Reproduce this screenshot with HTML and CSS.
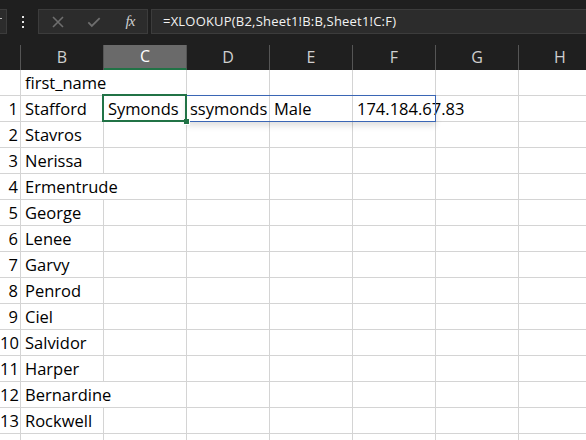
FILE: index.html
```html
<!DOCTYPE html>
<html>
<head>
<meta charset="utf-8">
<link rel="stylesheet" href="styles.css">
</head>
<body>
<div class="app">
  <div class="fbar">
    <div class="namebox"><span class="nb-arrow"></span></div>
    <div class="dots"><i></i><i></i><i></i></div>
    <div class="btns">
      <span class="btn"><svg width="14" height="14" viewBox="0 0 14 14"><path d="M2 2 L12 12 M12 2 L2 12" stroke="#6e6e6e" stroke-width="1.6" fill="none"/></svg></span>
      <span class="btn"><svg width="16" height="14" viewBox="0 0 16 14"><path d="M1.5 7.5 L5.5 11.5 L14.5 2.5" stroke="#6e6e6e" stroke-width="2" fill="none"/></svg></span>
      <span class="btn fx">fx</span>
    </div>
    <div class="formula">=XLOOKUP(B2,Sheet1!B:B,Sheet1!C:F)</div>
  </div>
  <div class="sheet">
    <div class="grid head">
      <div class="hc corner"></div>
      <div class="hc">B</div>
      <div class="hc sel">C</div>
      <div class="hc">D</div>
      <div class="hc">E</div>
      <div class="hc">F</div>
      <div class="hc">G</div>
      <div class="hc">H</div>
    </div>
    <div class="grid row">
      <div class="rn"></div>
      <div class="c span2">first_name</div>
      <div class="c"></div><div class="c"></div><div class="c"></div><div class="c"></div><div class="c"></div>
    </div>
    <div class="grid row">
      <div class="rn">1</div>
      <div class="c">Stafford</div>
      <div class="c">Symonds</div>
      <div class="c clip">ssymonds</div>
      <div class="c">Male</div>
      <div class="c span2">174.184.67.83</div>
      <div class="c"></div>
    </div>
    <div class="grid row"><div class="rn">2</div><div class="c">Stavros</div><div class="c"></div><div class="c"></div><div class="c"></div><div class="c"></div><div class="c"></div><div class="c"></div></div>
    <div class="grid row"><div class="rn">3</div><div class="c">Nerissa</div><div class="c"></div><div class="c"></div><div class="c"></div><div class="c"></div><div class="c"></div><div class="c"></div></div>
    <div class="grid row"><div class="rn">4</div><div class="c span2">Ermentrude</div><div class="c"></div><div class="c"></div><div class="c"></div><div class="c"></div><div class="c"></div></div>
    <div class="grid row"><div class="rn">5</div><div class="c">George</div><div class="c"></div><div class="c"></div><div class="c"></div><div class="c"></div><div class="c"></div><div class="c"></div></div>
    <div class="grid row"><div class="rn">6</div><div class="c">Lenee</div><div class="c"></div><div class="c"></div><div class="c"></div><div class="c"></div><div class="c"></div><div class="c"></div></div>
    <div class="grid row"><div class="rn">7</div><div class="c">Garvy</div><div class="c"></div><div class="c"></div><div class="c"></div><div class="c"></div><div class="c"></div><div class="c"></div></div>
    <div class="grid row"><div class="rn">8</div><div class="c">Penrod</div><div class="c"></div><div class="c"></div><div class="c"></div><div class="c"></div><div class="c"></div><div class="c"></div></div>
    <div class="grid row"><div class="rn">9</div><div class="c">Ciel</div><div class="c"></div><div class="c"></div><div class="c"></div><div class="c"></div><div class="c"></div><div class="c"></div></div>
    <div class="grid row"><div class="rn">10</div><div class="c">Salvidor</div><div class="c"></div><div class="c"></div><div class="c"></div><div class="c"></div><div class="c"></div><div class="c"></div></div>
    <div class="grid row"><div class="rn">11</div><div class="c">Harper</div><div class="c"></div><div class="c"></div><div class="c"></div><div class="c"></div><div class="c"></div><div class="c"></div></div>
    <div class="grid row"><div class="rn">12</div><div class="c span2">Bernardine</div><div class="c"></div><div class="c"></div><div class="c"></div><div class="c"></div><div class="c"></div></div>
    <div class="grid row"><div class="rn">13</div><div class="c">Rockwell</div><div class="c"></div><div class="c"></div><div class="c"></div><div class="c"></div><div class="c"></div><div class="c"></div></div>
    <div class="grid row"><div class="rn"></div><div class="c"></div><div class="c"></div><div class="c"></div><div class="c"></div><div class="c"></div><div class="c"></div><div class="c"></div></div>
    <div class="spill"></div>
    <div class="active"></div>
    <div class="handle"></div>
  </div>
</div>
</body>
</html>
```
FILE: styles.css
```css
html, body {
  margin: 0;
  padding: 0;
  background: #ffffff;
  overflow: hidden;
}
.app {
  width: 586px;
  height: 440px;
  overflow: hidden;
  font-family: "Open Sans", "Noto Sans", sans-serif;
}
.fbar {
  height: 45px;
  box-sizing: border-box;
  padding-top: 9px;
  background: #1f1f1f;
  display: flex;
  align-items: flex-start;
}
.namebox {
  width: 7px;
  height: 25px;
  box-sizing: border-box;
  background: #2c2c2c;
  border: 1px solid #3c3c3c;
  border-left: none;
  position: relative;
}
.nb-arrow {
  position: absolute;
  left: 0;
  top: 8px;
  width: 2px;
  height: 1px;
  background: #bdbdbd;
}
.dots {
  width: 31px;
  height: 25px;
  display: flex;
  flex-direction: column;
  align-items: center;
  justify-content: center;
  gap: 3px;
}
.dots i {
  display: block;
  width: 2px;
  height: 2px;
  background: #e6e6e6;
}
.btns {
  width: 110px;
  height: 25px;
  box-sizing: border-box;
  background: #2c2c2c;
  border: 1px solid #3c3c3c;
  display: flex;
  align-items: center;
  padding-left: 12px;
  gap: 22px;
}
.btn {
  width: 14px;
  height: 14px;
  display: flex;
  align-items: center;
  justify-content: center;
}
.fx {
  font-family: "Liberation Serif", serif;
  font-style: italic;
  font-size: 15px;
  color: #d0d0d0;
  letter-spacing: -1px;
}
.formula {
  margin-left: 3px;
  flex: 1;
  height: 25px;
  box-sizing: border-box;
  background: #2c2c2c;
  border: 1px solid #3c3c3c;
  border-right: none;
  color: #f2f2f2;
  font-size: 13px;
  letter-spacing: 0.2px;
  line-height: 23px;
  padding-left: 11px;
  white-space: nowrap;
}
.sheet {
  position: relative;
}
.grid {
  display: grid;
  grid-template-columns: 21px repeat(7, 83px);
}
.head {
  height: 25px;
  background: #1f1f1f;
}
.hc {
  box-sizing: border-box;
  border-right: 1px solid #555555;
  color: #cfcfcf;
  font-size: 16px;
  text-align: center;
  line-height: 24px;
  height: 25px;
}
.hc.sel {
  background: #6a6a6a;
  border-bottom: 2px solid #217346;
  color: #ffffff;
  line-height: 22px;
}
.row {
  height: 26px;
}
.rn, .c {
  box-sizing: border-box;
  height: 26px;
  border-right: 1px solid #d4d4d4;
  border-bottom: 1px solid #d4d4d4;
  font-size: 16.5px;
  line-height: 25px;
  color: #000000;
  white-space: nowrap;
}
.rn {
  text-align: right;
  padding-right: 2px;
}
.c {
  padding-left: 4px;
  overflow: visible;
}
.clip {
  overflow: hidden;
  padding-left: 3px;
}
.span2 {
  grid-column: span 2;
}
.spill {
  position: absolute;
  left: 186px;
  top: 50px;
  width: 250px;
  height: 27px;
  box-sizing: border-box;
  border: 1px solid #3a66b5;
  box-shadow: 0 4px 6px rgba(0, 0, 0, 0.12);
}
.active {
  position: absolute;
  left: 102px;
  top: 49px;
  width: 85px;
  height: 28px;
  box-sizing: border-box;
  border: 2px solid #217346;
}
.handle {
  position: absolute;
  left: 184px;
  top: 74px;
  width: 6px;
  height: 6px;
  box-sizing: border-box;
  background: #217346;
  border: 1px solid #ffffff;
  border-top: none;
  border-left: none;
}
```
